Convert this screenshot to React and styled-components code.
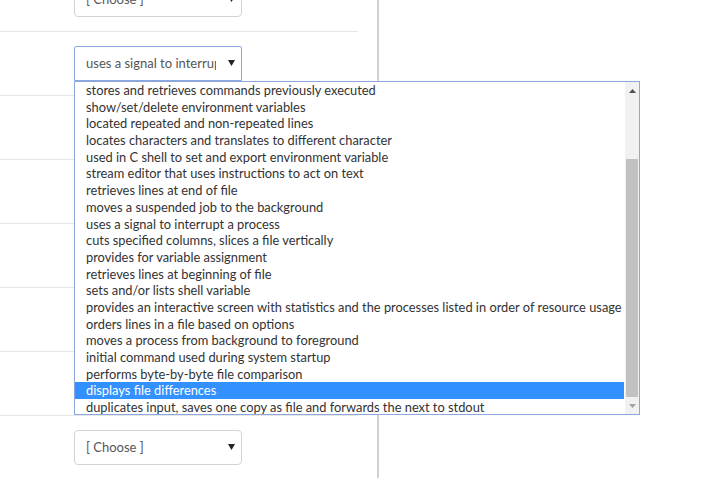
import React from "react";
import styled, { createGlobalStyle } from "styled-components";

const options = [
  "stores and retrieves commands previously executed",
  "show/set/delete environment variables",
  "located repeated and non-repeated lines",
  "locates characters and translates to different character",
  "used in C shell to set and export environment variable",
  "stream editor that uses instructions to act on text",
  "retrieves lines at end of file",
  "moves a suspended job to the background",
  "uses a signal to interrupt a process",
  "cuts specified columns, slices a file vertically",
  "provides for variable assignment",
  "retrieves lines at beginning of file",
  "sets and/or lists shell variable",
  "provides an interactive screen with statistics and the processes listed in order of resource usage",
  "orders lines in a file based on options",
  "moves a process from background to foreground",
  "initial command used during system startup",
  "performs byte-by-byte file comparison",
  "displays file differences",
  "duplicates input, saves one copy as file and forwards the next to stdout",
];

const rows = [
  { value: "[ Choose ]" },
  { value: "uses a signal to interrupt a process", open: true },
  { value: "" },
  { value: "" },
  { value: "" },
  { value: "" },
  { value: "" },
  { value: "[ Choose ]" },
];

const GlobalStyle = createGlobalStyle`
  html, body {
    margin: 0;
    padding: 0;
    background: #fff;
    overflow: hidden;
  }
  body {
    font-family: Lato, "Open Sans", sans-serif;
    font-size: 13px;
    color: #333;
  }
`;

const Page = styled.div`
  position: relative;
  display: flex;
  height: 478px;
  overflow: hidden;
`;

const Questions = styled.div`
  width: 358px;
  margin-top: -32px;
  display: flex;
  flex-direction: column;
`;

const Divider = styled.div`
  width: 2px;
  margin-left: 19px;
  background: #d0d0d0;
`;

const Row = styled.div`
  height: 64px;
  flex-shrink: 0;
  box-sizing: border-box;
  border-bottom: 1px solid #e6e6e6;
  display: flex;
  align-items: center;
  padding-left: 74px;
`;

const SelectBox = styled.div`
  position: relative;
  width: 168px;
  height: 35px;
  box-sizing: border-box;
  border: 1px solid ${(p) => (p.$focused ? "#8aa8dc" : "#d4d4d4")};
  border-radius: ${(p) => (p.$focused ? "2px 2px 0 0" : "4px")};
  background: #fff;
  display: flex;
  align-items: center;
  padding: 0 25px 0 11px;
  color: #555;
  font-size: 13px;
  margin-top: -1px;
`;

const SelectText = styled.span`
  white-space: nowrap;
  overflow: hidden;
`;

const Caret = styled.svg`
  position: absolute;
  right: 6px;
  top: 50%;
  margin-top: -3px;
`;

const Listbox = styled.div`
  position: absolute;
  left: 74px;
  top: 81px;
  width: 566px;
  height: 334px;
  box-sizing: border-box;
  border: 1px solid #8aa8dc;
  background: #fff;
  display: flex;
  font-size: 12.85px;
`;

const Items = styled.div`
  flex: 1;
  display: flex;
  flex-direction: column;
  padding-right: 1px;
  overflow: hidden;
`;

const Item = styled.div`
  height: 16.7px;
  line-height: 16.7px;
  flex-shrink: 0;
  padding-left: 11px;
  white-space: nowrap;
  overflow: hidden;
  color: ${(p) => (p.$selected ? "#fff" : "#333")};
  background: ${(p) => (p.$selected ? "#3390ff" : "transparent")};
`;

const Scrollbar = styled.div`
  width: 14px;
  background: #f1f1f1;
  display: flex;
  flex-direction: column;
`;

const ScrollArrow = styled.div`
  height: 17px;
  display: flex;
  align-items: center;
  justify-content: center;
`;

const TrackSpace = styled.div`
  height: 60px;
`;

const Thumb = styled.div`
  flex: 1;
  margin: 0 1px;
  background: #c1c1c1;
`;

const Triangle = ({ up, color }) => (
  <svg width="7" height="4" viewBox="0 0 7 4">
    <path d={up ? "M0 4 L3.5 0 L7 4 Z" : "M0 0 L3.5 4 L7 0 Z"} fill={color} />
  </svg>
);

export default function App() {
  return (
    <>
      <GlobalStyle />
      <Page>
        <Questions>
          {rows.map((r, i) => (
            <Row key={i}>
              {r.value !== "" && (
                <SelectBox $focused={r.open}>
                  <SelectText>{r.value}</SelectText>
                  <Caret width="7" height="6" viewBox="0 0 7 6">
                    <path d="M0 0 L7 0 L3.5 6 Z" fill="#222" />
                  </Caret>
                </SelectBox>
              )}
            </Row>
          ))}
        </Questions>
        <Divider />
        <Listbox>
          <Items>
            {options.map((o) => (
              <Item key={o} $selected={o === "displays file differences"}>
                {o}
              </Item>
            ))}
          </Items>
          <Scrollbar>
            <ScrollArrow>
              <Triangle up color="#505050" />
            </ScrollArrow>
            <TrackSpace />
            <Thumb />
            <ScrollArrow>
              <Triangle color="#a3a3a3" />
            </ScrollArrow>
          </Scrollbar>
        </Listbox>
      </Page>
    </>
  );
}
